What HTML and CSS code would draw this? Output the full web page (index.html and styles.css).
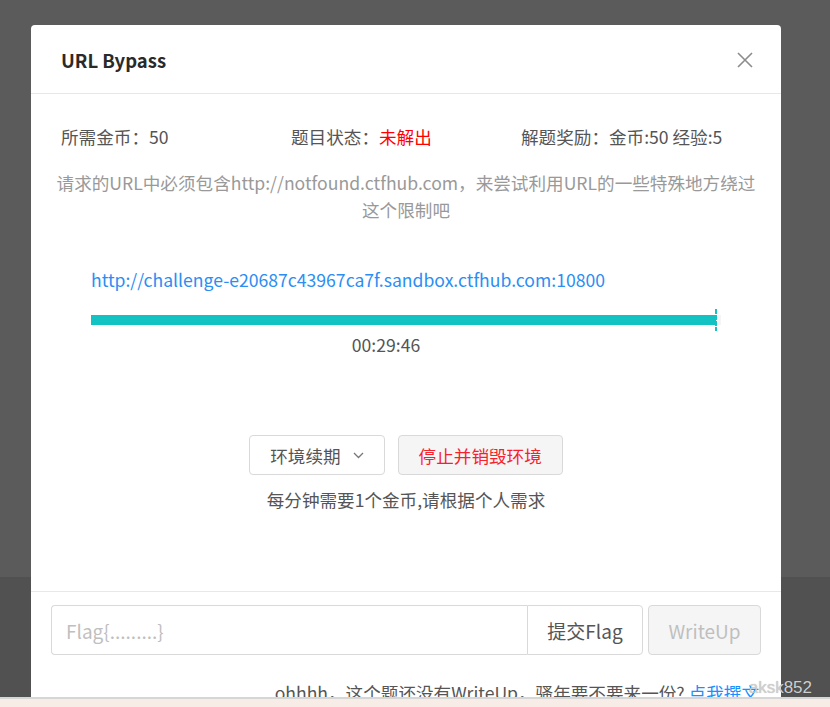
FILE: index.html
```html
<!DOCTYPE html>
<html lang="zh-CN">
<head>
<meta charset="utf-8">
<title>URL Bypass</title>
<link rel="stylesheet" href="styles.css">
</head>
<body>
<div class="page">
  <div class="page-main"></div>
  <div class="page-footer"></div>
</div>

<div class="modal">
  <div class="modal-header">
    <h2 class="modal-title">URL Bypass</h2>
    <button class="modal-close" aria-label="关闭">
      <svg width="16" height="16" viewBox="0 0 16 16"><path d="M1 1 L15 15 M15 1 L1 15" stroke="#8c8c8c" stroke-width="1.6" fill="none"/></svg>
    </button>
  </div>
  <div class="modal-body">
    <div class="info-row">
      <div class="info-item">所需金币：50</div>
      <div class="info-item">题目状态：<span class="unsolved">未解出</span></div>
      <div class="info-item">解题奖励：金币:50 经验:5</div>
    </div>
    <p class="desc">请求的URL中必须包含http://notfound.ctfhub.com，来尝试利用URL的一些特殊地方绕过这个限制吧</p>
    <div class="env">
      <a class="env-link" href="#">http://challenge-e20687c43967ca7f.sandbox.ctfhub.com:10800</a>
      <div class="progress">
        <div class="progress-fill" style="width: 99.2%"><span class="progress-mark"></span></div>
      </div>
      <div class="timer">00:29:46</div>
    </div>
    <div class="actions">
      <button class="btn">环境续期
        <svg class="chev" width="11" height="7" viewBox="0 0 11 7"><path d="M1 1 L5.5 5.5 L10 1" stroke="#777" stroke-width="1.3" fill="none"/></svg>
      </button>
      <button class="btn btn-danger">停止并销毁环境</button>
    </div>
    <div class="note">每分钟需要1个金币,请根据个人需求</div>
  </div>
  <div class="modal-footer">
    <div class="flag-row">
      <div class="input-group">
        <input class="flag-input" type="text" placeholder="Flag{.........}">
        <button class="btn-submit">提交Flag</button>
      </div>
      <button class="btn-writeup" disabled>WriteUp</button>
    </div>
    <div class="wu-tip">ohhhh，这个题还没有WriteUp，骚年要不要来一份? <a href="#" class="wu-link">点我撰文</a></div>
  </div>
</div>

<div class="watermark">aksk852</div>
<div class="bottom-strip"></div>
</body>
</html>
```

FILE: styles.css
```css
* { box-sizing: border-box; }

html, body {
  margin: 0;
  height: 707px;
  overflow: hidden;
}

body {
  font-family: "Noto Sans CJK SC", "Microsoft YaHei", sans-serif;
  font-size: 17.6px;
  color: #555;
  position: relative;
}

.page {
  display: flex;
  flex-direction: column;
  height: 707px;
}
.page-main { height: 577px; background: #5b5b5b; }
.page-footer { flex: 1; background: #515151; }

.modal {
  position: absolute;
  top: 25px;
  left: 31px;
  width: 750px;
  background: #fff;
  border-radius: 4px;
}

.modal-header {
  height: 69px;
  display: flex;
  align-items: center;
  justify-content: space-between;
  padding: 0 28px 0 30px;
  border-bottom: 1px solid #e8e8e8;
}
.modal-title {
  margin: 0;
  font-size: 18.5px;
  font-weight: 700;
  color: #2a2a2a;
  line-height: 24px;
  padding-top: 2px;
}
.modal-close {
  border: 0;
  background: none;
  padding: 0;
  width: 16px;
  height: 16px;
  display: flex;
  margin-top: 2px;
}

.modal-body {
  padding: 31px 30px 79px;
}

.info-row {
  display: grid;
  grid-template-columns: 230px 230px 230px;
  line-height: 24px;
}
.unsolved { color: #f00; }

.desc {
  margin: 20px -10px 0;
  text-align: center;
  color: #999;
  line-height: 27px;
}

.env {
  margin-top: 45px;
  padding: 0 30px;
}
.env-link {
  display: block;
  color: #2b8ef3;
  text-decoration: none;
  line-height: 24px;
}
.progress {
  margin-top: 23px;
  height: 10px;
  background: #f5f5f5;
}
.progress-fill {
  position: relative;
  height: 10px;
  background: #13c2c2;
}
.progress-mark {
  position: absolute;
  right: -1px;
  top: -6px;
  width: 2px;
  height: 22px;
  background: repeating-linear-gradient(to bottom, #13c2c2 0 5px, transparent 5px 6px);
}
.timer {
  margin-top: 8px;
  text-align: center;
  padding-right: 40px;
  line-height: 24px;
}

.actions {
  margin-top: 78px;
  display: flex;
  justify-content: center;
  gap: 13px;
}
.btn {
  height: 40px;
  padding: 0 20px;
  border: 1px solid #d9d9d9;
  border-radius: 4px;
  background: #fff;
  color: #555;
  font-family: inherit;
  font-size: 17.6px;
  display: flex;
  align-items: center;
  gap: 12px;
}
.btn-danger {
  background: #f5f5f5;
  color: #f5222d;
}

.note {
  margin-top: 13px;
  text-align: center;
  line-height: 24px;
}

.modal-footer {
  border-top: 1px solid #e8e8e8;
  padding: 13px 20px 40px;
}
.flag-row {
  display: flex;
  gap: 5px;
}
.input-group {
  display: flex;
  flex: 1;
  height: 50px;
}
.flag-input {
  flex: 1;
  min-width: 0;
  border: 1px solid #d9d9d9;
  border-right: 0;
  border-radius: 4px 0 0 4px;
  padding: 0 14px;
  font-family: inherit;
  font-size: 19px;
  color: #555;
  outline: none;
}
.flag-input::placeholder { color: #bfbfbf; }
.btn-submit {
  width: 116px;
  border: 1px solid #d9d9d9;
  border-radius: 0 4px 4px 0;
  background: #fff;
  color: #555;
  font-family: inherit;
  font-size: 19px;
}
.btn-writeup {
  width: 113px;
  height: 50px;
  border: 1px solid #d9d9d9;
  border-radius: 4px;
  background: #f5f5f5;
  color: #bfbfbf;
  font-family: inherit;
  font-size: 19px;
}

.wu-tip {
  margin-top: 26px;
  text-align: right;
  line-height: 24px;
  padding-right: 2px;
}
.wu-link {
  color: #1890ff;
  text-decoration: none;
}

.watermark {
  position: absolute;
  right: 18px;
  bottom: 9px;
  font-family: "Liberation Sans", sans-serif;
  font-size: 17px;
  line-height: 20px;
  color: #cfcfcf;
  text-shadow: 0 0 1px rgba(0,0,0,0.25);
}

.bottom-strip {
  position: absolute;
  left: 0;
  right: 0;
  bottom: 0;
  height: 10px;
  background: #f8ece7;
  border-top: 2px solid #d6d6d6;
}
```
